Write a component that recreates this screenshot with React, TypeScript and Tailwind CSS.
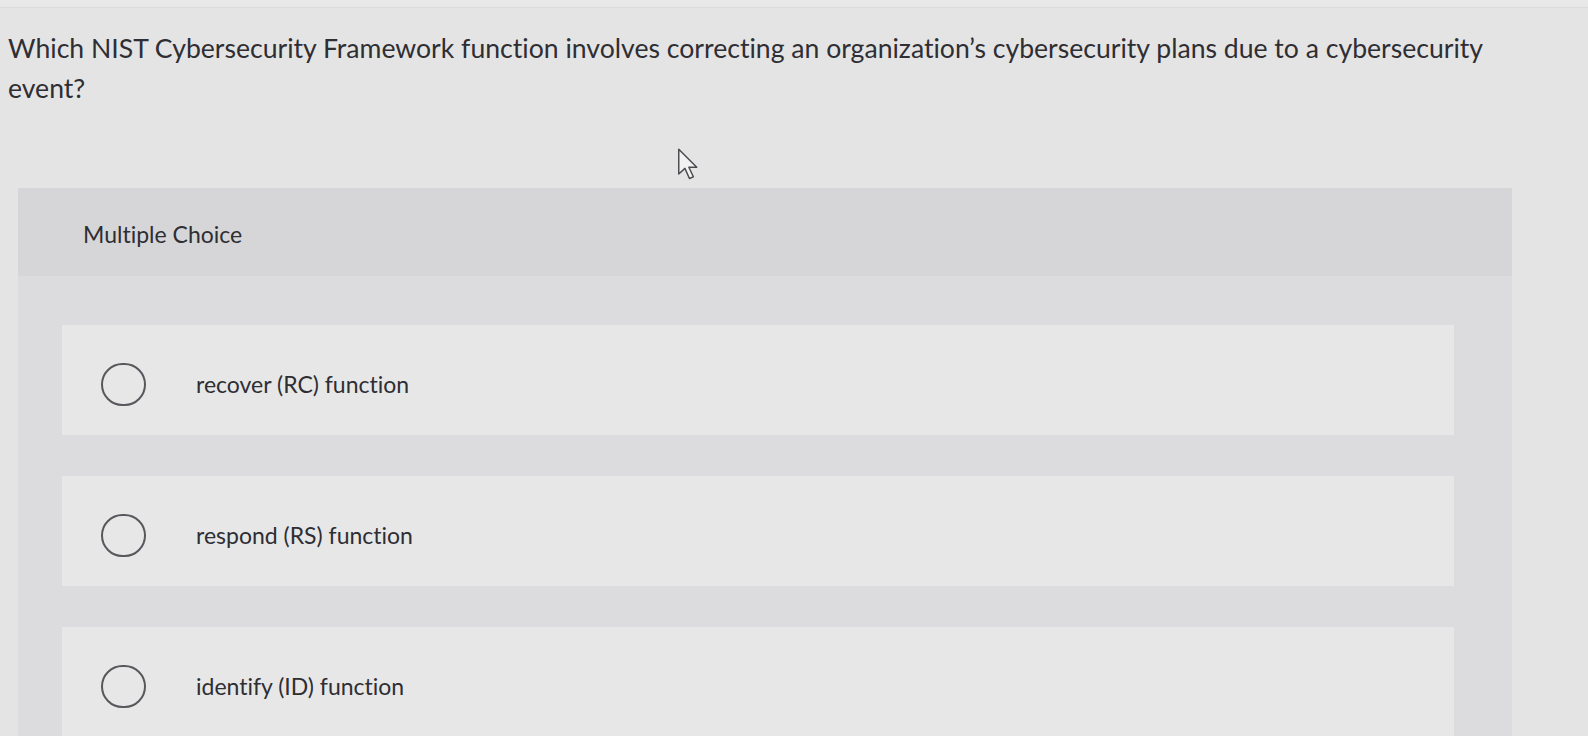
import React from "react";

const options = ["recover (RC) function", "respond (RS) function", "identify (ID) function"];

export default function App() {
  return (
    <div
      className="relative w-[1588px] h-[736px] overflow-hidden bg-[#e5e4e5] text-[#2e2e33] [font-variant-ligatures:none]"
      style={{ fontFamily: "Lato, 'Open Sans', sans-serif" }}
    >
      <div className="h-[8px] bg-[#e9e8e9] border-b border-[#dcdbdc]" />
      <div className="pl-[8px] pt-[20px] pr-[40px] text-[26.6px] leading-[40px]">
        Which NIST Cybersecurity Framework function involves correcting an organization’s cybersecurity plans due to a cybersecurity event?
      </div>
      <div className="ml-[18px] mr-[76px] mt-[80px] bg-[#dcdcde]">
        <div className="h-[88px] bg-[#d6d6d8] pl-[65px] pt-[5px] flex items-center text-[23px]">Multiple Choice</div>
        <div className="flex flex-col gap-[41px] pt-[49px] pl-[44px] pr-[58px]">
          {options.map((o) => (
            <div key={o} className="h-[110px] bg-[#e7e7e8] flex items-center pt-[8px]">
              <div className="ml-[39px] w-[45px] h-[43px] rounded-full border-2 border-[#57575c]" />
              <div className="ml-[50px] text-[23px]">{o}</div>
            </div>
          ))}
        </div>
      </div>
      <svg className="absolute left-[676px] top-[147px]" width="28" height="36" viewBox="0 0 24 32">
        <path d="M2 2 L2 24 L7.5 19 L11.5 28 L15 26.5 L11 18 L18 18 Z" fill="#f2f2f2" stroke="#4a4a4f" strokeWidth="1.3" strokeLinejoin="round" />
      </svg>
    </div>
  );
}
